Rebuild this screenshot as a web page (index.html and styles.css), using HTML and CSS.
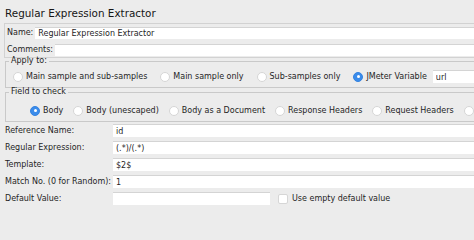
FILE: index.html
```html
<!DOCTYPE html>
<html>
<head>
<meta charset="utf-8">
<link rel="stylesheet" href="styles.css">
</head>
<body>
<div class="page">
  <div class="title">Regular Expression Extractor</div>
  <div class="namebox">
    <div class="nrow"><span class="nlabel">Name:</span><input class="field" type="text" value="Regular Expression Extractor"></div>
    <div class="nrow"><span class="nlabel">Comments:</span><input class="field" type="text" value=""></div>
  </div>
  <fieldset class="group apply">
    <legend>Apply to:</legend>
    <div class="radios">
      <span class="opt"><span class="radio"></span>Main sample and sub-samples</span>
      <span class="opt"><span class="radio"></span>Main sample only</span>
      <span class="opt"><span class="radio"></span>Sub-samples only</span>
      <span class="opt"><span class="radio on"></span>JMeter Variable</span>
      <input class="field var" type="text" value="url">
    </div>
  </fieldset>
  <fieldset class="group check">
    <legend>Field to check</legend>
    <div class="radios">
      <span class="opt"><span class="radio on"></span>Body</span>
      <span class="opt"><span class="radio"></span>Body (unescaped)</span>
      <span class="opt"><span class="radio"></span>Body as a Document</span>
      <span class="opt"><span class="radio"></span>Response Headers</span>
      <span class="opt"><span class="radio"></span>Request Headers</span>
      <span class="opt"><span class="radio"></span></span>
    </div>
  </fieldset>
  <div class="form">
    <span class="flabel">Reference Name:</span><input class="field" type="text" value="id">
    <span class="flabel">Regular Expression:</span><input class="field" type="text" value="(.*)/(.*)">
    <span class="flabel">Template:</span><input class="field" type="text" value="$2$">
    <span class="flabel">Match No. (0 for Random):</span><input class="field" type="text" value="1">
    <span class="flabel">Default Value:</span>
    <div class="defrow"><input class="field short" type="text" value=""><span class="ckbox"></span><span class="cklabel">Use empty default value</span></div>
  </div>
</div>
</body>
</html>
```

FILE: styles.css
```css
html, body {
  margin: 0;
  padding: 0;
  background: #ececec;
  overflow: hidden;
}
body {
  width: 474px;
  height: 225px;
}
.page {
  width: 520px;
  font-family: "DejaVu Sans", "Liberation Sans", sans-serif;
  font-size: 8px;
  color: #1f1f1f;
}
.title {
  height: 23px;
  line-height: 27px;
  padding-left: 5px;
  font-size: 10.4px;
  color: #161616;
}
.namebox {
  margin-left: 4px;
  border: 1px solid #d2d2d2;
  border-right: none;
  padding: 0 0 0 2px;
  height: 33px;
}
.nrow {
  display: flex;
  align-items: center;
  height: 17px;
}
.nlabel {
  padding-right: 2px;
  white-space: nowrap;
}
.field {
  -webkit-appearance: none;
  appearance: none;
  box-sizing: border-box;
  height: 12px;
  flex: 1;
  min-width: 0;
  margin: 0;
  padding: 0 0 0 3px;
  border: none;
  border-top: 1px solid #d4d4d4;
  background: #ffffff;
  font-family: inherit;
  font-size: 8px;
  color: #1f1f1f;
  outline: none;
}
.group {
  margin: 0 0 0 5px;
  padding: 0;
  border: 1px solid #c9c9c9;
  border-right: none;
  min-width: 0;
}
.group legend {
  margin-left: 3px;
  padding: 0 2px;
  height: 12px;
  line-height: 12px;
}
.radios {
  display: flex;
  align-items: center;
  height: 15px;
}
.apply {
  margin-top: -3px;
}
.apply .radios {
  margin: 2px 0 3px 7px;
  gap: 13px;
}
.check {
  margin-top: -2px;
}
.check .radios {
  margin: 5px 0 3px 24px;
  gap: 10px;
}
.opt {
  display: flex;
  align-items: center;
  gap: 3px;
  white-space: nowrap;
}
.radio {
  box-sizing: border-box;
  width: 10px;
  height: 10px;
  border-radius: 50%;
  background: #ffffff;
  border: 1px solid #d6d6d6;
  flex: none;
}
.radio.on {
  background: #3b8ceb;
  border-color: #3583e0;
  position: relative;
}
.radio.on::after {
  content: "";
  position: absolute;
  left: 2.5px;
  top: 2.5px;
  width: 3px;
  height: 3px;
  border-radius: 50%;
  background: #ffffff;
}
.var {
  height: 13px;
  margin-left: -7px;
}
.form {
  display: grid;
  grid-template-columns: 108px 1fr;
  grid-auto-rows: 17px;
  align-items: center;
  padding-left: 5px;
}
.flabel {
  white-space: nowrap;
}
.form .field {
  height: 13px;
}
.defrow {
  display: flex;
  align-items: center;
}
.defrow .short {
  flex: none;
  width: 157px;
}
.ckbox {
  box-sizing: border-box;
  width: 10px;
  height: 10px;
  margin: 0 4px 0 8px;
  background: #ffffff;
  border: 1px solid #d6d6d6;
  border-radius: 2px;
}
.cklabel {
  white-space: nowrap;
}
```
